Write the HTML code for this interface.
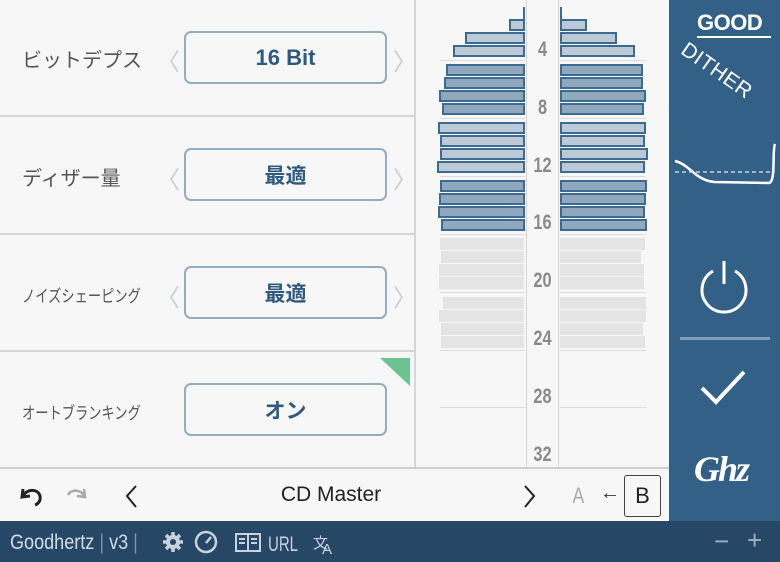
<!DOCTYPE html>
<html><head><meta charset="utf-8"><style>
*{margin:0;padding:0;box-sizing:border-box}
body{width:780px;height:562px;overflow:hidden;background:#f7f7f7;font-family:"Liberation Sans","Noto Sans CJK JP",sans-serif;position:relative}
.a{position:absolute}
.hr{position:absolute;left:0;width:416px;height:2px;background:#d6d6d6}
.lbl{position:absolute;left:22px;color:#555;font-size:20px;white-space:nowrap}
.btn{position:absolute;left:184px;width:203px;height:53px;border:2px solid #94abc0;border-radius:7px;color:#2f5a80;font-size:21px;font-weight:bold;display:flex;align-items:center;justify-content:center}
.ch{position:absolute;color:#c3cfda;font-size:24px;font-family:"DejaVu Sans",sans-serif;font-weight:200}
.b{position:absolute;height:12px;border:2px solid #3c6b92}
.d{background:#8fa8be}.l{background:#bccad7}
.g{position:absolute;height:12px;background:#e4e4e4}
.num{position:absolute;left:522px;width:41px;text-align:center;color:#8a8a8a;font-size:21px;font-weight:bold;transform:scaleX(0.78)}
.gl{position:absolute;height:1px;background:#dcdcdc}
</style></head><body>
<div class="hr" style="top:115px"></div>
<div class="hr" style="top:233px"></div>
<div class="hr" style="top:350px"></div>
<div class="a" style="left:414px;top:0;width:2px;height:468px;background:#d6d6d6"></div>

<div class="lbl" style="top:44px">ビットデプス</div>
<div class="ch" style="left:156px;top:42px">〈</div><div class="ch" style="left:393px;top:42px">〉</div>
<div class="btn" style="top:31px;font-size:22px">16 Bit</div>

<div class="lbl" style="top:162px">ディザー量</div>
<div class="ch" style="left:156px;top:160px">〈</div><div class="ch" style="left:393px;top:160px">〉</div>
<div class="btn" style="top:148px">最適</div>

<div class="lbl" style="top:282px;font-size:17px;transform:scaleX(0.78);transform-origin:left">ノイズシェーピング</div>
<div class="ch" style="left:156px;top:278px">〈</div><div class="ch" style="left:393px;top:278px">〉</div>
<div class="btn" style="top:266px">最適</div>

<div class="lbl" style="top:399px;font-size:17px;transform:scaleX(0.78);transform-origin:left">オートブランキング</div>
<div class="a" style="left:380px;top:358px;width:0;height:0;border-left:30px solid transparent;border-top:28px solid #6cc391"></div>
<div class="btn" style="top:383px">オン</div>

<div class="a" style="left:526px;top:0;width:1px;height:468px;background:#d4d4d4"></div>
<div class="a" style="left:558px;top:0;width:1px;height:468px;background:#d4d4d4"></div>
<div class="gl" style="left:440px;width:85px;top:60px"></div><div class="gl" style="left:560px;width:86px;top:60px"></div>
<div class="gl" style="left:440px;width:85px;top:118px"></div><div class="gl" style="left:560px;width:86px;top:118px"></div>
<div class="gl" style="left:440px;width:85px;top:176px"></div><div class="gl" style="left:560px;width:86px;top:176px"></div>
<div class="gl" style="left:440px;width:85px;top:234px"></div><div class="gl" style="left:560px;width:86px;top:234px"></div>
<div class="gl" style="left:440px;width:85px;top:292px"></div><div class="gl" style="left:560px;width:86px;top:292px"></div>
<div class="gl" style="left:440px;width:85px;top:350px"></div><div class="gl" style="left:560px;width:86px;top:350px"></div>
<div class="gl" style="left:440px;width:85px;top:407px"></div><div class="gl" style="left:560px;width:86px;top:407px"></div>

<div class="a" style="left:523px;top:7px;width:2px;height:12px;background:#3c6b92"></div>
<div class="a" style="left:560px;top:7px;width:2px;height:12px;background:#3c6b92"></div>
<div class="b l" style="left:509px;width:16px;top:19px"></div><div class="b l" style="left:560px;width:27px;top:19px"></div>
<div class="b l" style="left:465px;width:60px;top:32px"></div><div class="b l" style="left:560px;width:57px;top:32px"></div>
<div class="b l" style="left:453px;width:72px;top:45px"></div><div class="b l" style="left:560px;width:75px;top:45px"></div>

<div class="b d" style="left:446px;width:79px;top:64px"></div><div class="b d" style="left:560px;width:83px;top:64px"></div>
<div class="b d" style="left:444px;width:81px;top:77px"></div><div class="b d" style="left:560px;width:83px;top:77px"></div>
<div class="b d" style="left:439px;width:86px;top:90px"></div><div class="b d" style="left:560px;width:86px;top:90px"></div>
<div class="b d" style="left:442px;width:83px;top:103px"></div><div class="b d" style="left:560px;width:84px;top:103px"></div>

<div class="b l" style="left:438px;width:87px;top:122px"></div><div class="b l" style="left:560px;width:86px;top:122px"></div>
<div class="b l" style="left:440px;width:85px;top:135px"></div><div class="b l" style="left:560px;width:85px;top:135px"></div>
<div class="b l" style="left:440px;width:85px;top:148px"></div><div class="b l" style="left:560px;width:88px;top:148px"></div>
<div class="b l" style="left:437px;width:88px;top:161px"></div><div class="b l" style="left:560px;width:85px;top:161px"></div>

<div class="b d" style="left:440px;width:85px;top:180px"></div><div class="b d" style="left:560px;width:87px;top:180px"></div>
<div class="b d" style="left:439px;width:86px;top:193px"></div><div class="b d" style="left:560px;width:86px;top:193px"></div>
<div class="b d" style="left:438px;width:87px;top:206px"></div><div class="b d" style="left:560px;width:85px;top:206px"></div>
<div class="b d" style="left:441px;width:84px;top:219px"></div><div class="b d" style="left:560px;width:87px;top:219px"></div>

<div class="g" style="left:440px;width:84px;top:238px"></div><div class="g" style="left:560px;width:85px;top:238px"></div>
<div class="g" style="left:441px;width:83px;top:251px"></div><div class="g" style="left:560px;width:81px;top:251px"></div>
<div class="g" style="left:439px;width:85px;top:264px"></div><div class="g" style="left:560px;width:84px;top:264px"></div>
<div class="g" style="left:439px;width:85px;top:277px"></div><div class="g" style="left:560px;width:84px;top:277px"></div>
<div class="g" style="left:443px;width:81px;top:297px"></div><div class="g" style="left:560px;width:86px;top:297px"></div>
<div class="g" style="left:439px;width:85px;top:310px"></div><div class="g" style="left:560px;width:86px;top:310px"></div>
<div class="g" style="left:441px;width:83px;top:323px"></div><div class="g" style="left:560px;width:83px;top:323px"></div>
<div class="g" style="left:441px;width:83px;top:336px"></div><div class="g" style="left:560px;width:85px;top:336px"></div>

<div class="num" style="top:38px">4</div>
<div class="num" style="top:96px">8</div>
<div class="num" style="top:154px">12</div>
<div class="num" style="top:211px">16</div>
<div class="num" style="top:269px">20</div>
<div class="num" style="top:327px">24</div>
<div class="num" style="top:385px">28</div>
<div class="num" style="top:443px">32</div>

<div class="a" style="left:0;top:467px;width:669px;height:2px;background:#cfcfcf"></div>
<svg class="a" style="left:18px;top:484px" width="80" height="24" viewBox="0 0 80 24">
<path d="M5 5 L4 13 L12 12" fill="none" stroke="#222" stroke-width="3"/>
<path d="M5 12 C8 5 20 4 22 12 C23 17 20 20 17 21" fill="none" stroke="#222" stroke-width="3"/>
<path d="M66 5 L67 13 L59 12" fill="none" stroke="#aaa" stroke-width="2.6"/>
<path d="M66 12 C63 5 53 5 50 11" fill="none" stroke="#aaa" stroke-width="2.6"/>
</svg>
<svg class="a" style="left:122px;top:484px" width="20" height="26"><path d="M14 2 L5 12 L14 23" fill="none" stroke="#222" stroke-width="2"/></svg>
<div class="a" style="left:231px;top:483px;width:200px;text-align:center;font-size:21px;color:#222">CD Master</div>
<svg class="a" style="left:520px;top:484px" width="20" height="26"><path d="M5 2 L14 12 L5 23" fill="none" stroke="#222" stroke-width="2"/></svg>
<div class="a" style="left:571px;top:483px;font-size:22px;color:#aaa;transform:scaleX(0.8)">A</div>
<div class="a" style="left:600px;top:482px;font-size:20px;color:#333">←</div>
<div class="a" style="left:624px;top:475px;width:37px;height:42px;border:1.5px solid #444;border-radius:3px;font-size:22px;color:#222;text-align:center;line-height:40px">B</div>

<div class="a" style="left:669px;top:0;width:111px;height:521px;background:#336087"></div>
<div class="a" style="left:697px;top:10px;font-size:22px;font-weight:bold;color:#fff;letter-spacing:-0.5px">GOOD</div>
<div class="a" style="left:697px;top:36px;width:74px;height:2px;background:#fff"></div>
<div class="a" style="left:690px;top:38px;font-size:21px;color:#fff;transform:rotate(35deg);transform-origin:left top;letter-spacing:0.5px">DITHER</div>
<svg class="a" style="left:669px;top:130px" width="111" height="60">
<path d="M6 31 C20 34 26 50 45 52 L100 53 C107 52 103 20 106 14" fill="none" stroke="#fff" stroke-width="2.5"/>
<path d="M6 42 H106" stroke="#c9d6e3" stroke-width="1.5" stroke-dasharray="4 3"/>
</svg>
<svg class="a" style="left:696px;top:258px" width="56" height="56">
<path d="M17 13 A22 22 0 1 0 39 13" fill="none" stroke="#fff" stroke-width="3"/>
<path d="M28 3 V26" stroke="#fff" stroke-width="3"/>
</svg>
<div class="a" style="left:680px;top:337px;width:90px;height:3px;background:#7f9db8"></div>
<svg class="a" style="left:698px;top:365px" width="52" height="44"><path d="M4 23 L18 37 L46 7" fill="none" stroke="#fff" stroke-width="4"/></svg>
<div class="a" style="left:694px;top:448px;font-size:36px;color:#fff;font-style:italic;font-weight:bold;font-family:'Liberation Serif',serif;letter-spacing:-2px">Ghz</div>

<div class="a" style="left:0;top:521px;width:780px;height:41px;background:#264766"></div>
<div class="a" style="left:10px;top:531px;font-size:21px;color:#d4dbe3;white-space:nowrap;transform:scaleX(0.86);transform-origin:left">Goodhertz <span style="color:#7d93a8">|</span> v3 <span style="color:#7d93a8">|</span></div>
<svg class="a" style="left:160px;top:530px" width="200" height="26">
<g fill="#c9d2dc"><circle cx="13" cy="12" r="7"/><g stroke="#c9d2dc" stroke-width="3.5"><path d="M13 2 V22 M3 12 H23 M6 5 L20 19 M20 5 L6 19"/></g></g>
<circle cx="13" cy="12" r="3" fill="#264766"/>
<circle cx="46" cy="12" r="10" fill="none" stroke="#c9d2dc" stroke-width="2.5"/><path d="M46 13 L51 7" stroke="#c9d2dc" stroke-width="2.5"/>
<path d="M76 4 H88 V21 H76 Z M88 4 H100 V21 H88 Z M79 9 H85 M79 13 H85 M91 9 H97 M91 13 H97" fill="none" stroke="#c9d2dc" stroke-width="2"/>
<text x="108" y="21" fill="#c9d2dc" font-size="21" font-family="Liberation Sans, sans-serif" textLength="30" lengthAdjust="spacingAndGlyphs">URL</text>
<text x="153" y="18" fill="#c9d2dc" font-size="15" font-family="Noto Sans CJK JP, sans-serif">文</text>
<text x="162" y="24" fill="#c9d2dc" font-size="15" font-family="Liberation Sans, sans-serif">A</text>
</svg>
<div class="a" style="left:714px;top:526px;font-size:26px;color:#9fb0c2">−</div>
<div class="a" style="left:747px;top:525px;font-size:26px;color:#9fb0c2">+</div>
</body></html>
